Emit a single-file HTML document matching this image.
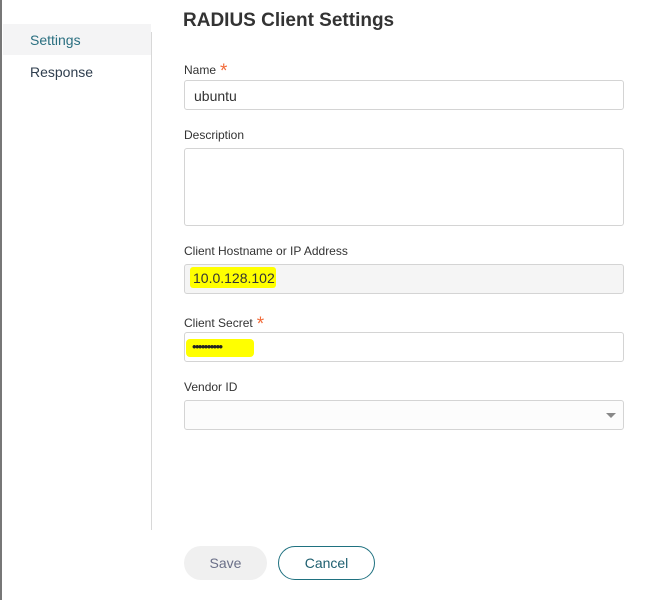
<!DOCTYPE html>
<html><head><style>
body{margin:0;width:656px;height:600px;background:#fff;font-family:"Liberation Sans",sans-serif;position:relative;overflow:hidden;color:#333}
.a{position:absolute}
.lbl{position:absolute;left:184px;font-size:12px;color:#333}
.star{color:#f26b3a;font-size:19px;position:relative;top:3px;margin-left:4px}
.in{position:absolute;left:184px;width:440px;border:1px solid #d4d4d4;border-radius:3px;background:#fff;box-sizing:border-box}
</style></head><body>
<div class="a" style="left:0;top:0;width:2px;height:600px;background:#777"></div>
<div class="a" style="left:3px;top:24px;width:148px;height:31px;background:#f4f4f5"></div>
<div class="a" style="left:30px;top:32px;font-size:14px;color:#2a6f80">Settings</div>
<div class="a" style="left:30px;top:64px;font-size:14px;color:#2f3e4e">Response</div>
<div class="a" style="left:151px;top:32px;width:1px;height:498px;background:#d8d8d8"></div>
<div class="a" style="left:183px;top:10px;font-size:19px;font-weight:bold;color:#333">RADIUS Client Settings</div>
<div class="lbl" style="top:58px">Name<span class="star">*</span></div>
<div class="in" style="top:80px;height:30px;padding:7px 9px;font-size:14px">ubuntu</div>
<div class="lbl" style="top:128px">Description</div>
<div class="in" style="top:148px;height:78px"></div>
<div class="lbl" style="top:244px">Client Hostname or IP Address</div>
<div class="in" style="top:264px;height:30px;background:#f5f5f5"></div>
<div class="a" style="left:190px;top:267px;width:86px;height:21px;background:#ffff00;border-radius:3px"></div>
<div class="a" style="left:193px;top:270px;font-size:14px;color:#333">10.0.128.102</div>
<div class="lbl" style="top:311px">Client Secret<span class="star">*</span></div>
<div class="in" style="top:332px;height:30px"></div>
<div class="a" style="left:186px;top:339px;width:68px;height:18px;background:#ffff00;border-radius:4px"></div>
<div class="a" style="left:192px;top:339px;font-size:13px;color:#222;letter-spacing:-1.6px">••••••••••</div>
<div class="lbl" style="top:380px">Vendor ID</div>
<div class="in" style="top:400px;height:30px;background:#fcfcfc"></div>
<div class="a" style="left:606px;top:413px;width:0;height:0;border-left:5px solid transparent;border-right:5px solid transparent;border-top:5px solid #888"></div>
<div class="a" style="left:184px;top:546px;width:83px;height:34px;border-radius:17px;background:#f0f0f0;color:#6a6f88;font-size:14px;text-align:center;line-height:34px">Save</div>
<div class="a" style="left:278px;top:546px;width:97px;height:34px;border-radius:17px;border:1px solid #1f7180;box-sizing:border-box;color:#1f6070;font-size:14px;text-align:center;line-height:32px">Cancel</div>
</body></html>
